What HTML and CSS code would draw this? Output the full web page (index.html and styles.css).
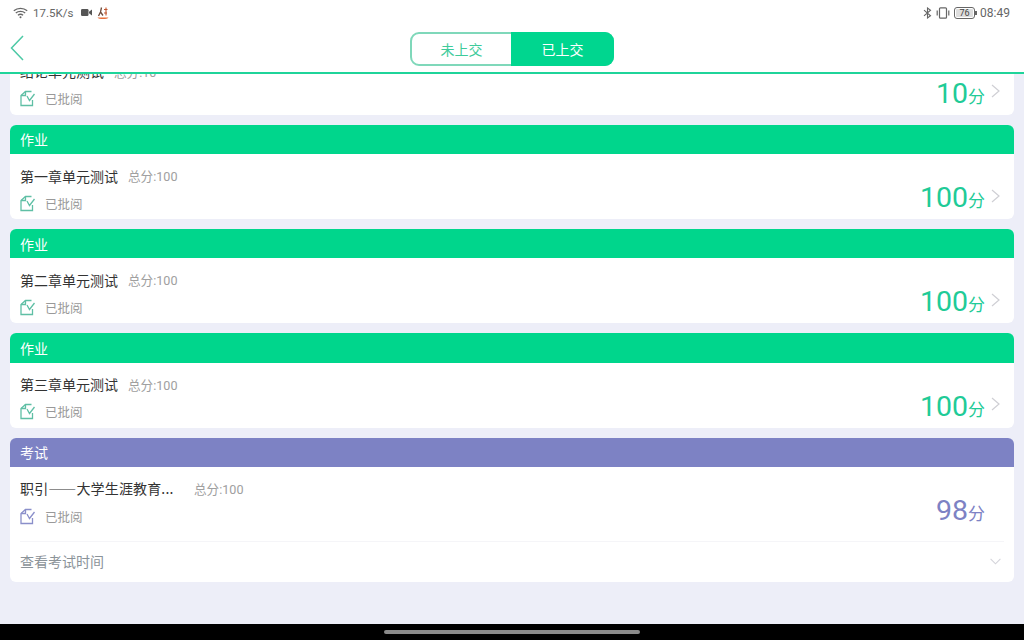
FILE: index.html
```html
<!DOCTYPE html>
<html lang="zh">
<head>
<meta charset="utf-8">
<title>已上交</title>
<link rel="stylesheet" href="styles.css">
</head>
<body>
<div class="screen">
  <header class="top">
    <div class="status">
      <div class="status-left">
        <svg class="i-wifi" width="15" height="12" viewBox="0 0 15 12" fill="none" stroke="#666" stroke-width="1.300"><path d="M.8 3.800C4.600.6 10.400.6 14.200 3.800"/><path d="M2.800 6C5.400 3.900 9.600 3.900 12.200 6"/><path d="M4.900 8.200C6.300 7.200 8.700 7.200 10.100 8.200"/><circle cx="7.500" cy="10.200" r="1" fill="#666" stroke="none"/></svg>
        <span class="speed">17.5K/s</span>
        <svg class="i-video" width="11" height="9" viewBox="0 0 11 9"><rect x="0" y="1" width="7.500" height="7" rx="1.200" fill="#555"/><path d="M8 3.800 11 1.600v5.800L8 5.200z" fill="#555"/></svg>
        <svg class="i-app" width="12" height="14" viewBox="0 0 12 14" fill="none"><path d="M4.500 1.500 3.500 6M3.500 6 1.500 10M3.500 6 6 9.500" stroke="#6b4a3a" stroke-width="1.300"/><path d="M7 3.500h3.500M9 1.500v8M7 7h3" stroke="#c0562f" stroke-width="1.100"/><path d="M.5 11.500h11C10.500 13.500 1.500 13.500.5 11.500z" fill="#e8703a"/></svg>
      </div>
      <div class="status-right">
        <svg width="9" height="12" viewBox="0 0 9 12" fill="none" stroke="#666" stroke-width="1.100"><path d="M1 3.200 7.500 8.800 4.500 11V1L7.500 3.200 1 8.800"/></svg>
        <svg width="14" height="12" viewBox="0 0 14 12" fill="none" stroke="#666" stroke-width="1.200"><rect x="3.500" y=".8" width="7" height="10.400" rx="1"/><path d="M1.200 3.500v5M12.800 3.500v5"/></svg>
        <div class="battery"><span class="battery-level">76</span></div>
        <span class="clock">08:49</span>
      </div>
    </div>
    <nav class="nav">
      <svg class="back" width="14" height="26" viewBox="0 0 14 26" fill="none" stroke="#4cc9a5" stroke-width="1.500"><path d="M13 1 1.500 13 13 25"/></svg>
      <div class="seg">
        <div class="seg-item">未上交</div>
        <div class="seg-item seg-on">已上交</div>
      </div>
    </nav>
  </header>

  <main class="scroll">
    <div class="list">
      <section class="card">
        <div class="row">
          <div class="info">
            <div class="title-line"><span class="title">结论单元测试</span><span class="total">总分:10</span></div>
            <div class="state"><svg class="doc green" width="16" height="17" viewBox="0 0 16 17" fill="none"><path d="M11.500 1.500H5.500L1 5.500V15.500H12.500V10"/><path d="M1 5.500H5.500V1.500"/><path d="M7 6 9.500 10.500 14.500 4"/></svg><span>已批阅</span></div>
          </div>
          <div class="score green-t"><b>10</b><i>分</i></div>
          <svg class="chev" width="9" height="14" viewBox="0 0 9 14" fill="none" stroke="#cfcfd4" stroke-width="1.200"><path d="M1 1 8 7 1 13"/></svg>
        </div>
      </section>

      <section class="card">
        <h2 class="head">作业</h2>
        <div class="row">
          <div class="info">
            <div class="title-line"><span class="title">第一章单元测试</span><span class="total">总分:100</span></div>
            <div class="state"><svg class="doc green" width="16" height="17" viewBox="0 0 16 17" fill="none"><path d="M11.500 1.500H5.500L1 5.500V15.500H12.500V10"/><path d="M1 5.500H5.500V1.500"/><path d="M7 6 9.500 10.500 14.500 4"/></svg><span>已批阅</span></div>
          </div>
          <div class="score green-t"><b>100</b><i>分</i></div>
          <svg class="chev" width="9" height="14" viewBox="0 0 9 14" fill="none" stroke="#cfcfd4" stroke-width="1.200"><path d="M1 1 8 7 1 13"/></svg>
        </div>
      </section>

      <section class="card">
        <h2 class="head">作业</h2>
        <div class="row">
          <div class="info">
            <div class="title-line"><span class="title">第二章单元测试</span><span class="total">总分:100</span></div>
            <div class="state"><svg class="doc green" width="16" height="17" viewBox="0 0 16 17" fill="none"><path d="M11.500 1.500H5.500L1 5.500V15.500H12.500V10"/><path d="M1 5.500H5.500V1.500"/><path d="M7 6 9.500 10.500 14.500 4"/></svg><span>已批阅</span></div>
          </div>
          <div class="score green-t"><b>100</b><i>分</i></div>
          <svg class="chev" width="9" height="14" viewBox="0 0 9 14" fill="none" stroke="#cfcfd4" stroke-width="1.200"><path d="M1 1 8 7 1 13"/></svg>
        </div>
      </section>

      <section class="card">
        <h2 class="head">作业</h2>
        <div class="row">
          <div class="info">
            <div class="title-line"><span class="title">第三章单元测试</span><span class="total">总分:100</span></div>
            <div class="state"><svg class="doc green" width="16" height="17" viewBox="0 0 16 17" fill="none"><path d="M11.500 1.500H5.500L1 5.500V15.500H12.500V10"/><path d="M1 5.500H5.500V1.500"/><path d="M7 6 9.500 10.500 14.500 4"/></svg><span>已批阅</span></div>
          </div>
          <div class="score green-t"><b>100</b><i>分</i></div>
          <svg class="chev" width="9" height="14" viewBox="0 0 9 14" fill="none" stroke="#cfcfd4" stroke-width="1.200"><path d="M1 1 8 7 1 13"/></svg>
        </div>
      </section>

      <section class="card">
        <h2 class="head exam">考试</h2>
        <div class="row">
          <div class="info">
            <div class="title-line"><span class="title wide">职引——大学生涯教育...</span><span class="total">总分:100</span></div>
            <div class="state"><svg class="doc purple" width="16" height="17" viewBox="0 0 16 17" fill="none"><path d="M11.500 1.500H5.500L1 5.500V15.500H12.500V10"/><path d="M1 5.500H5.500V1.500"/><path d="M7 6 9.500 10.500 14.500 4"/></svg><span>已批阅</span></div>
          </div>
          <div class="score purple-t"><b>98</b><i>分</i></div>
          <div class="chev-space"></div>
        </div>
        <div class="foot">
          <span>查看考试时间</span>
          <svg class="foot-chev" width="11" height="7" viewBox="0 0 11 7" fill="none" stroke="#d4d4da" stroke-width="1.100"><path d="M.6.800 5.500 5.800 10.400.800"/></svg>
        </div>
      </section>
    </div>
  </main>

  <footer class="gesture"><div class="home"></div></footer>
</div>
</body>
</html>
```

FILE: styles.css
```css
* { box-sizing: border-box; }
html, body { margin: 0; padding: 0; }
body {
  font-family: Roboto, "Noto Sans CJK SC", sans-serif;
  background: #000;
}
.screen {
  width: 1024px;
  height: 640px;
  display: flex;
  flex-direction: column;
  overflow: hidden;
  background: #edeef8;
}

/* top */
.top {
  height: 74px;
  flex: none;
  background: #fff;
  border-bottom: 2px solid #1fd49a;
  position: relative;
  z-index: 2;
}
.status {
  height: 25px;
  padding: 0 14px 0 13px;
  display: flex;
  justify-content: space-between;
  align-items: center;
  color: #666;
  font-size: 12px;
}
.status-left, .status-right { display: flex; align-items: center; }
.speed { margin: 0 8px 0 5px; font-size: 11.500px; }
.i-app { margin-left: 5px; }
.status-right { gap: 4px; }
.battery {
  width: 21px;
  height: 12px;
  border: 1px solid #666;
  border-radius: 3px;
  display: flex;
  align-items: center;
  justify-content: center;
  position: relative;
  padding: 1px;
}
.battery::after {
  content: "";
  position: absolute;
  right: -3px;
  top: 3px;
  width: 2px;
  height: 4px;
  background: #666;
}
.battery-level {
  font-size: 9px;
  line-height: 8px;
  color: #444;
  background: #ddd;
  width: 100%;
  text-align: center;
  border-radius: 1px;
}
.clock { margin-left: 1px; }
.nav {
  height: 47px;
  padding-left: 10px;
  display: flex;
  align-items: center;
  position: relative;
}
.back { margin-top: -2px; }
.seg {
  position: absolute;
  left: 410px;
  top: 7px;
  width: 204px;
  height: 34px;
  border: 2px solid #7fd8ba;
  border-radius: 9px;
  display: flex;
  font-size: 14px;
}
.seg-item {
  width: 99px;
  flex: none;
  display: flex;
  align-items: center;
  justify-content: center;
  color: #3ecb9b;
}
.seg-on {
  flex: 1;
  margin: -2px -2px -2px 0;
  border-radius: 0 9px 9px 0;
  background: #00d68f;
  color: #fff;
}

/* list */
.scroll { flex: 1; overflow: hidden; min-height: 0; }
.list {
  margin-top: -24.330px;
  padding: 0 10px;
  display: flex;
  flex-direction: column;
  gap: 10px;
}
.card {
  background: #fff;
  border-radius: 6px;
  overflow: hidden;
}
.head {
  margin: 0;
  height: 29.330px;
  padding-left: 10px;
  display: flex;
  align-items: center;
  font-size: 14px;
  font-weight: 400;
  color: #fff;
  background: #00d68c;
}
.exam { background: #7d82c4; }
.row {
  height: 65px;
  padding: 11.500px 14px 0 10px;
  display: flex;
}
.info { flex: 1; }
.title-line { height: 20px; display: flex; align-items: center; }
.title { font-size: 14px; color: #333; font-family: "Noto Sans CJK SC", sans-serif; }
.title.wide { width: 164px; letter-spacing: .15px; }
.total { margin-left: 10px; font-size: 12.600px; color: #a0a0a0; }
.state {
  margin-top: 7.800px;
  height: 20px;
  display: flex;
  align-items: center;
  font-size: 12.500px;
  color: #999;
}
.state span { margin-left: 9px; }
.doc { stroke-width: 1.300; }
.green { stroke: #5fbfa5; }
.purple { stroke: #8a8fca; }
.score {
  align-self: flex-start;
  margin-top: 14.500px;
  height: 36px;
  display: flex;
  align-items: baseline;
  line-height: 36px;
}
.score b { font-size: 28.500px; font-weight: 400; }
.score i { font-size: 17px; font-style: normal; }
.green-t { color: #1fcb97; }
.purple-t { color: #7d82c4; }
.chev { margin: 23px 0 0 6px; flex: none; }
.chev-space { width: 15px; flex: none; }
.foot {
  margin: 9px 10px 0 10px;
  padding-bottom: 1px;
  height: 41px;
  border-top: 1px solid #f5f5f8;
  display: flex;
  justify-content: space-between;
  align-items: center;
  font-size: 14px;
  color: #8b9399;
}
.foot-chev { margin-right: 3px; }

/* gesture */
.gesture {
  height: 16px;
  flex: none;
  background: #000;
  display: flex;
  justify-content: center;
  align-items: center;
}
.home { width: 256px; height: 4px; border-radius: 2px; background: #8a8a8a; }
```
